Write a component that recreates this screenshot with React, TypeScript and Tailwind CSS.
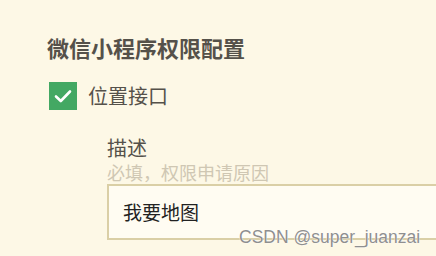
import React from "react";

export default function App() {
  return (
    <div
      className="w-[436px] h-[256px] overflow-hidden bg-[#fdf8e6] relative"
      style={{ fontFamily: '"Noto Sans CJK SC", "Noto Sans", sans-serif' }}
    >
      <div className="pl-[47px] pt-[32px]">
        <div className="text-[22px] leading-[30px] font-bold text-[#55514a]">微信小程序权限配置</div>
        <div className="flex items-center mt-[20px] ml-[2px] gap-[11px]">
          <div className="w-[28px] h-[28px] bg-[#43a863] flex items-center justify-center">
            <svg width="18" height="14" viewBox="0 0 18 14" fill="none">
              <path d="M2 7.5 L6.8 12 L16 2.5" stroke="#ffffff" strokeWidth="2.6" strokeLinecap="round" strokeLinejoin="round" />
            </svg>
          </div>
          <div className="text-[20px] leading-[28px] text-[#55514a]">位置接口</div>
        </div>
        <div className="ml-[60px] mt-[25px]">
          <div className="text-[20px] leading-[26px] text-[#55514a]">描述</div>
          <div className="text-[18px] leading-[23px] text-[#cfc7b3]">必填，权限申请原因</div>
          <div className="w-[340px] h-[56px] border-2 border-[#dacfa6] bg-[#fffcf2] flex items-center pl-[14px]">
            <span className="text-[19px] text-[#222222]">我要地图</span>
          </div>
        </div>
      </div>
      <div
        className="absolute left-[239px] top-[226px] text-[17.5px] leading-[22px] text-[#8f8f8f]"
        style={{ fontFamily: '"Liberation Sans", Arial, sans-serif', textShadow: "0 0 1px #ffffff, 0 0 1px #ffffff" }}
      >
        CSDN @super_juanzai
      </div>
    </div>
  );
}
